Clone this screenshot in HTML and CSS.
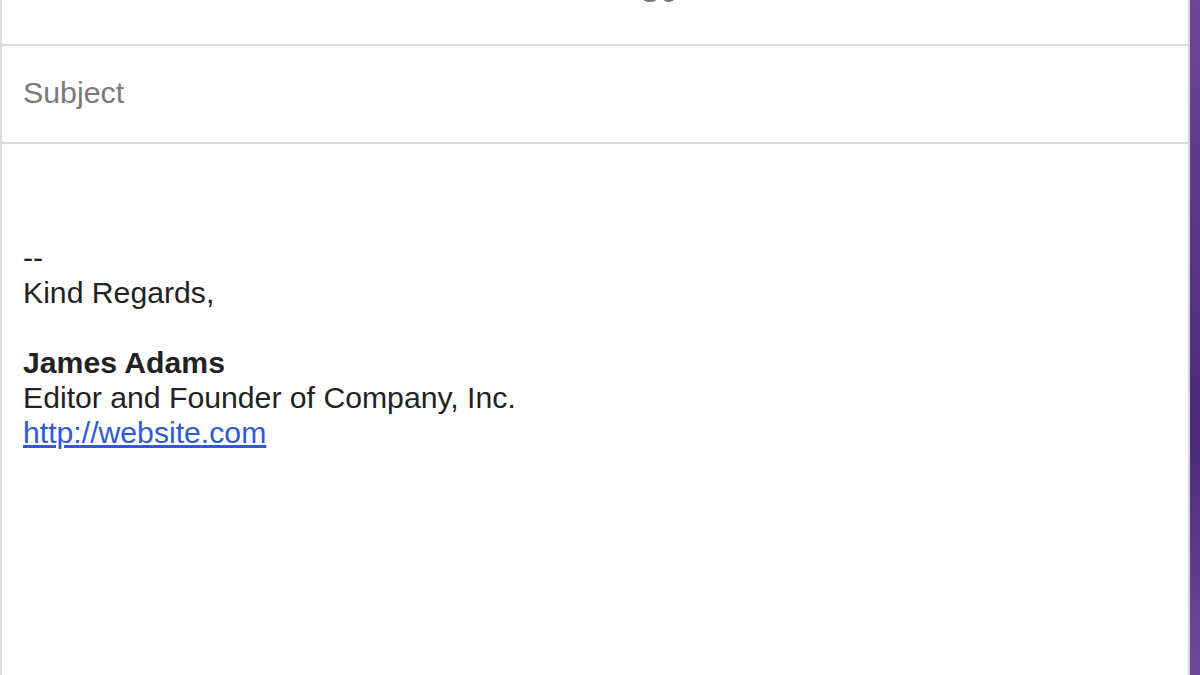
FILE: index.html
```html
<!DOCTYPE html>
<html>
<head>
<meta charset="utf-8">
<link rel="stylesheet" href="styles.css">
</head>
<body>
<div class="desk">
  <div class="compose">
    <div class="row top-row">
      <span class="cc">Cc</span>
    </div>
    <div class="row subject-row">
      <span class="subject">Subject</span>
    </div>
    <div class="body">
      <div class="line">--</div>
      <div class="line">Kind Regards,</div>
      <div class="line">&nbsp;</div>
      <div class="line bold">James Adams</div>
      <div class="line">Editor and Founder of Company, Inc.</div>
      <div class="line"><a class="link" href="#">http://website.com</a></div>
    </div>
  </div>
  <div class="wall"></div>
</div>
</body>
</html>
```

FILE: styles.css
```css
html, body {
  margin: 0;
  padding: 0;
  width: 1200px;
  height: 675px;
  overflow: hidden;
  background: #ffffff;
}
.desk {
  display: flex;
  width: 1200px;
  height: 675px;
  font-family: "Liberation Sans", Arial, sans-serif;
}
.compose {
  flex: 0 0 1186px;
  display: flex;
  flex-direction: column;
  background: #ffffff;
  border-left: 2px solid #dcdcdc;
  border-right: 2px solid #d6d6d6;
}
.row {
  border-bottom: 2px solid #dadada;
  box-sizing: border-box;
}
.top-row {
  height: 46px;
  display: flex;
  justify-content: center;
  overflow: hidden;
}
.cc {
  font-size: 31px;
  line-height: 30px;
  color: #777777;
  margin-top: -23px;
  margin-left: 124px;
}
.subject-row {
  height: 98px;
  display: flex;
  align-items: center;
  padding-left: 21px;
}
.subject {
  font-size: 30.3px;
  color: #7a7a7a;
  margin-top: -3px;
}
.body {
  padding: 96px 0 0 21px;
  font-size: 30.2px;
  line-height: 35px;
  color: #222222;
}
.line {
  white-space: nowrap;
}
.bold {
  font-weight: bold;
}
.link {
  color: #3159d6;
  text-decoration: underline;
}
.wall {
  flex: 1;
  background: linear-gradient(180deg, #6a4699 0%, #553486 40%, #4b2c78 65%, #6c4a9c 100%);
}
```
